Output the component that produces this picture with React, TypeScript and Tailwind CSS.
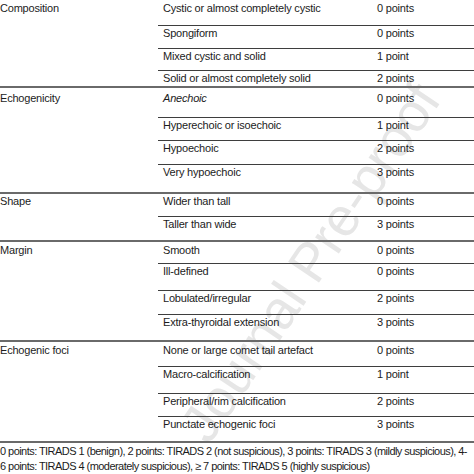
import React from "react";

type Row = { text: string; pts: string; cls: string; italic?: boolean };
type Group = { label: string; first?: boolean; pad: string; rows: Row[] };

const groups: Group[] = [
  {
    label: "Composition",
    first: true,
    pad: "pt-[1px]",
    rows: [
      { text: "Cystic or almost completely cystic", pts: "0 points", cls: "h-[25px] pt-[1px]" },
      { text: "Spongiform", pts: "0 points", cls: "h-[23px] pt-0" },
      { text: "Mixed cystic and solid", pts: "1 point", cls: "h-[22px] pt-0" },
      { text: "Solid or almost completely solid", pts: "2 points", cls: "h-[16px] pt-0" },
    ],
  },
  {
    label: "Echogenicity",
    pad: "pt-[3px]",
    rows: [
      { text: "Anechoic", pts: "0 points", cls: "h-[29px] pt-[3px]", italic: true },
      { text: "Hyperechoic or isoechoic", pts: "1 point", cls: "h-[23px] pt-0" },
      { text: "Hypoechoic", pts: "2 points", cls: "h-[24px] pt-0" },
      { text: "Very hypoechoic", pts: "3 points", cls: "h-[28px] pt-0" },
    ],
  },
  {
    label: "Shape",
    pad: "pt-0",
    rows: [
      { text: "Wider than tall", pts: "0 points", cls: "h-[22px] pt-0" },
      { text: "Taller than wide", pts: "3 points", cls: "h-[24px] pt-0" },
    ],
  },
  {
    label: "Margin",
    pad: "pt-[1px]",
    rows: [
      { text: "Smooth", pts: "0 points", cls: "h-[21px] pt-[1px]" },
      { text: "Ill-defined", pts: "0 points", cls: "h-[27px] pt-0" },
      { text: "Lobulated/irregular", pts: "2 points", cls: "h-[24px] pt-0" },
      { text: "Extra-thyroidal extension", pts: "3 points", cls: "h-[26px] pt-0" },
    ],
  },
  {
    label: "Echogenic foci",
    pad: "pt-[1px]",
    rows: [
      { text: "None or large comet tail artefact", pts: "0 points", cls: "h-[24px] pt-[1px]" },
      { text: "Macro-calcification", pts: "1 point", cls: "h-[27px] pt-0" },
      { text: "Peripheral/rim calcification", pts: "2 points", cls: "h-[23px] pt-0" },
      { text: "Punctate echogenic foci", pts: "3 points", cls: "h-[25px] pt-0" },
    ],
  },
];

export default function App() {
  return (
    <div
      className="relative w-[474px] h-[474px] overflow-hidden bg-white text-[#1c1c1c] text-[11px] leading-[14px] tracking-[-0.2px]"
      style={{ fontFamily: '"Liberation Sans", Arial, sans-serif' }}
    >
      <div className="absolute left-[310px] top-[262px] -translate-x-1/2 -translate-y-1/2 -rotate-[56deg] whitespace-nowrap text-[54px] leading-[54px] tracking-normal text-[#e6e6e6] pointer-events-none select-none">
        Journal Pre-proof
      </div>
      <div className="relative">
        {groups.map((g) => (
          <div
            key={g.label}
            className={g.first ? "flex" : "flex border-t-2 border-[#6a6a6a]"}
          >
            <div className={"w-[158px] shrink-0 whitespace-nowrap " + g.pad}>{g.label}</div>
            <div className="flex-1">
              {g.rows.map((r, i) => (
                <div
                  key={r.text}
                  className={
                    "flex " + r.cls + (i > 0 ? " border-t border-[#3e3e3e]" : "")
                  }
                >
                  <div className={"w-[214px] shrink-0 pl-[5px] whitespace-nowrap" + (r.italic ? " italic" : "")}>
                    {r.text}
                  </div>
                  <div className="pl-[5px] whitespace-nowrap">{r.pts}</div>
                </div>
              ))}
            </div>
          </div>
        ))}
        <div className="border-t-2 border-[#6a6a6a] pt-[1px] leading-[15px] tracking-[-0.55px] whitespace-nowrap">
          <div>0 points: TIRADS 1 (benign), 2 points: TIRADS 2 (not suspicious), 3 points: TIRADS 3 (mildly suspicious), 4-</div>
          <div>6 points: TIRADS 4 (moderately suspicious), ≥ 7 points: TIRADS 5 (highly suspicious)</div>
        </div>
      </div>
    </div>
  );
}
